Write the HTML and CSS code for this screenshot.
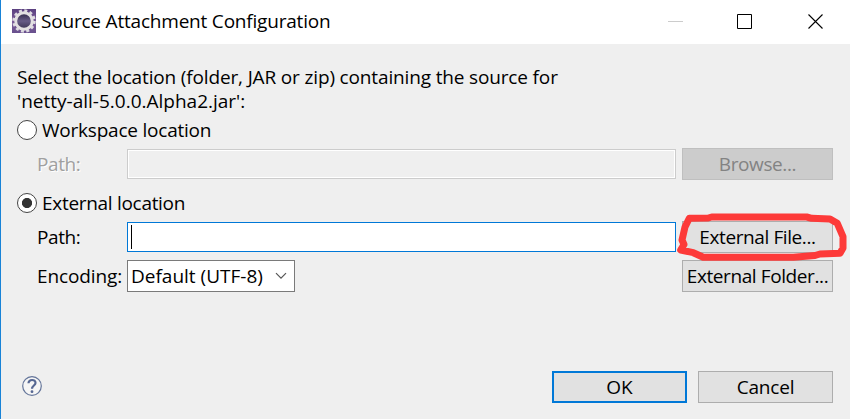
FILE: index.html
```html
<!DOCTYPE html>
<html>
<head>
  <meta charset="utf-8">
  <meta name="viewport" content="width=device-width, initial-scale=1">
  <title>Source Attachment Configuration</title>
  <link rel="stylesheet" href="styles.css">
</head>
<body>
<div class="dialog">

  <div class="titlebar">
    <svg class="app-icon" width="24" height="24" viewBox="0 0 24 24">
      <defs>
        <linearGradient id="bg" x1="0" y1="0" x2="0" y2="1">
          <stop offset="0" stop-color="#5b4080"></stop>
          <stop offset="0.5" stop-color="#7a5c98"></stop>
          <stop offset="1" stop-color="#69508e"></stop>
        </linearGradient>
        <linearGradient id="ball" x1="0" y1="0" x2="0" y2="1">
          <stop offset="0" stop-color="#2e2745"></stop>
          <stop offset="0.5" stop-color="#675b86"></stop>
          <stop offset="1" stop-color="#393150"></stop>
        </linearGradient>
      </defs>
      <rect width="24" height="24" fill="url(#bg)"></rect>
      <circle cx="12" cy="12" r="10.4" fill="none" stroke="#dedbe1" stroke-width="2.6" stroke-dasharray="3 2.445"></circle>
      <circle cx="12" cy="12" r="8.300" fill="url(#ball)" stroke="#e3e0e2" stroke-width="2.900"></circle>
    </svg>
    <span class="title">Source Attachment Configuration</span>
    <svg class="win-buttons" width="156" height="17" viewBox="0 0 156 17">
      <path d="M0 8.5h15" stroke="#ccc"></path>
      <path d="M69.500 1.500h14v14h-14z" fill="none" stroke="#000"></path>
      <path d="M140.500 1.500l14 14M154.500 1.500l-14 14" stroke="#000" stroke-width="1.1"></path>
    </svg>
  </div>

  <div class="content">
    <p class="message"><span class="msg1">Select the location (folder, JAR or zip) containing the source for</span><br><span>'netty-all-5.0.0.Alpha2.jar':</span></p>

    <div class="radio-row">
      <span class="radio"></span>
      <span class="workspace">Workspace location</span>
    </div>
    <div class="form-row">
      <span class="label disabled">Path:</span>
      <div class="field field-disabled"></div>
      <div class="button button-disabled"><span class="tight">Browse...</span></div>
    </div>

    <div class="radio-row external-row">
      <span class="radio checked"></span>
      <span class="external">External location</span>
    </div>
    <div class="form-row">
      <span class="label">Path:</span>
      <div class="field field-active"><span class="caret"></span></div>
      <div class="button marked">
        <span class="tight">External File...</span>
        <svg class="marker" width="174" height="54" viewBox="0 0 174 54">
          <path d="M13.300 5.300L9 14L6 27L8 31.500L4.700 37L17.300 39.700L27.300 44.300H117.300L139 42.500L144 41L164 40.300L167 35V23.700L161.300 10.300L154 6L135.700 5.300L130.700 4H35.700L32.300 5Z" fill="none" stroke="#fd3a39" stroke-width="7" stroke-linejoin="round"></path>
        </svg>
      </div>
    </div>
    <div class="form-row encoding-row">
      <span class="label encoding">Encoding:</span>
      <div class="combo-cell">
        <div class="combo">
          <span class="combo-text">Default (UTF-8)</span>
          <svg width="12" height="8" viewBox="0 0 12 8">
            <path d="M1 1.200l5 5 5-5" fill="none" stroke="#555" stroke-width="1.200"></path>
          </svg>
        </div>
      </div>
      <div class="button"><span class="tight">External Folder...</span></div>
    </div>
  </div>

  <div class="footer">
    <svg class="help" width="20" height="20" viewBox="0 0 20 20">
      <circle cx="10" cy="10" r="9.300" fill="#f5f5f5" stroke="#64759a" stroke-width="1.200"></circle>
      <path d="M6.500 7.200C6.400 3 13.700 2.900 13.500 7C13.400 9.500 10 9.600 10 12.800" fill="none" stroke="#566792" stroke-width="2.200"></path>
      <circle cx="10" cy="15.700" r="1.400" fill="#566792"></circle>
    </svg>
    <div class="button ok"><span>OK</span></div>
    <div class="button"><span class="cancel">Cancel</span></div>
  </div>

</div>
</body>
</html>
```
FILE: styles.css
```css
* {
  box-sizing: border-box;
}

body {
  margin: 0;
  background-color: #efefef;
  color: #000;
  font-family: "Open Sans", "Noto Sans", sans-serif;
  font-size: 19px;
  line-height: 24px;
  white-space: nowrap;
}

.dialog {
  display: flex;
  flex-direction: column;
  height: 419px;
  border-left: 1px solid #1883d7;
}

.titlebar {
  display: flex;
  align-items: center;
  height: 44px;
  padding: 0 26px 2px 11px;
  background-color: #fff;
}

.title {
  margin-left: 5px;
  letter-spacing: -0.2px;
}

.win-buttons {
  margin-left: auto;
}

.content {
  padding: 21px 17px 0 16px;
}

.message {
  margin: 0;
}

.msg1 {
  letter-spacing: -0.15px;
}

.radio-row {
  display: flex;
  align-items: center;
  height: 28px;
  margin-top: 3px;
  margin-bottom: 4px;
}

.external-row {
  margin-top: 9px;
}

.workspace {
  letter-spacing: -0.22px;
}

.external {
  letter-spacing: -0.3px;
}

.radio {
  width: 20px;
  height: 20px;
  margin-right: 5px;
  border: 1px solid #444;
  border-radius: 50%;
  background-color: #fff;
}

.radio.checked {
  background-image: radial-gradient(circle, #333 4.7px, transparent 5.4px);
}

.form-row {
  display: grid;
  grid-template-columns: 110px 549px 151px;
  align-items: center;
  height: 32px;
}

.form-row .button {
  width: 151px;
  margin-left: 6px;
}

.encoding-row {
  margin-top: 7px;
}

.label {
  padding-left: 20px;
  letter-spacing: -0.4px;
}

.encoding {
  letter-spacing: -0.1px;
}

.disabled {
  color: #a0a0a0;
  text-shadow: 1px 1px 0 #fff;
}

.field {
  height: 30px;
  border: 1px solid #ccc;
}

.field-disabled {
  box-shadow: inset 0 0 0 1px #fff;
}

.field-active {
  padding: 2px 3px;
  border-color: #0078d7;
  background-color: #fff;
}

.caret {
  display: block;
  width: 1px;
  height: 24px;
  background-color: #000;
}

.combo {
  display: flex;
  align-items: center;
  justify-content: space-between;
  width: 168px;
  height: 32px;
  padding: 0 7px 0 3px;
  border: 1px solid #7a7a7a;
  background-color: #fff;
}

.button {
  display: flex;
  align-items: center;
  justify-content: center;
  height: 32px;
  border: 1px solid #adadad;
  background-color: #e1e1e1;
}

.button-disabled {
  border-color: #bfbfbf;
  background-color: #ccc;
  color: #838383;
}

.tight {
  letter-spacing: -0.4px;
}

.marked {
  position: relative;
}

.marker {
  position: absolute;
  top: -9px;
  left: -7px;
}

.footer {
  display: flex;
  align-items: center;
  gap: 11px;
  margin-top: auto;
  padding: 0 17px 16px 21px;
}

.footer .button {
  width: 135px;
}

.footer .ok {
  border: 2px solid #0078d7;
}

.cancel {
  letter-spacing: -0.2px;
}

.help {
  margin-right: auto;
  margin-bottom: 2px;
}
```
